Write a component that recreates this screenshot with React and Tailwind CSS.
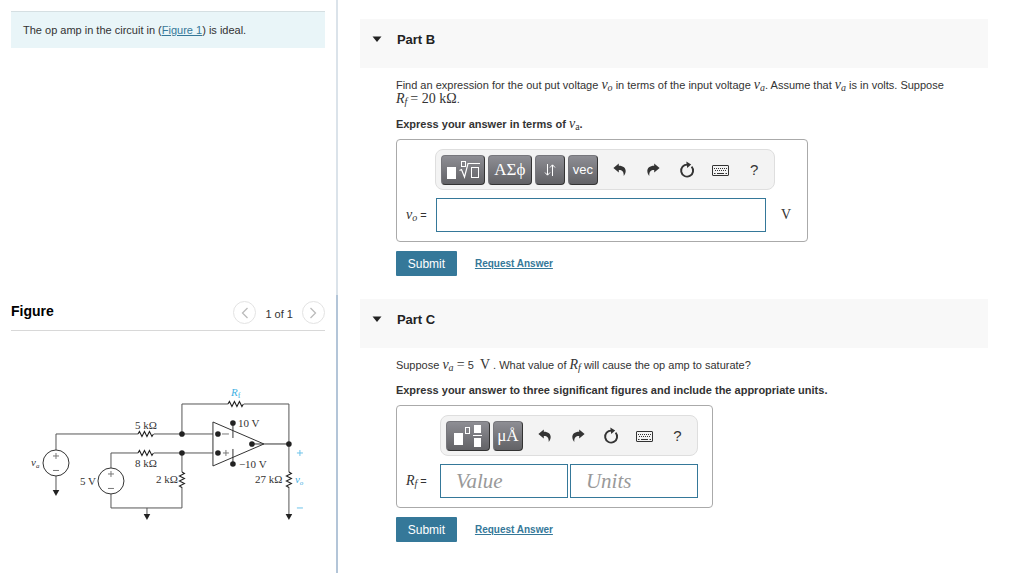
import React, { useState } from 'react';

const SERIF = "font-['Liberation_Serif',serif]";

/* v_o, R_f and the like */
function Sym({ name, sub, upright = false }) {
  return (
    <span className={`${SERIF} text-[14px] leading-none font-normal`}>
      <i>{name}</i>
      <sub className={`text-[10px] leading-none bottom-[-2px] ${upright ? '' : 'italic'}`}>{sub}</sub>
    </span>
  );
}

function UndoIcon({ flip = false }) {
  return (
    <svg width="14" height="14" viewBox="0 0 14 14" fill="#333" className={flip ? '-scale-x-100' : ''}>
      <path d="M5.8 0.4 L0.4 4.9 L5.8 9.4 V6.9 C9 6.7 11 8.4 10.7 13 C14.4 8.6 13 2.8 5.8 2.8 Z" />
    </svg>
  );
}

function ResetIcon() {
  return (
    <svg width="16" height="18" viewBox="0 0 16 18" fill="none">
      <path d="M8.5 3.6 A6 6 0 1 0 12.6 5.6" stroke="#333" strokeWidth="1.9" />
      <path d="M7.3 0.6 L12.2 3.4 L8.2 7 Z" fill="#333" />
    </svg>
  );
}

function KeyboardIcon() {
  return (
    <svg width="17" height="13" viewBox="0 0 17 13" fill="none" stroke="#333">
      <rect x="0.5" y="2.5" width="16" height="10" rx="0.5" />
      <path d="M2 5.5 H15 M3 7.5 H15" strokeDasharray="1 1" />
      <path d="M2 10.5 H3.5 M5 10.5 H12 M13.5 10.5 H15" />
    </svg>
  );
}

function RootIcon() {
  return (
    <svg width="34" height="24" viewBox="0 0 34 24" fill="none" stroke="#fff">
      <rect x="1" y="9" width="9" height="12" fill="#fff" stroke="none" />
      <rect x="15.5" y="3.5" width="4" height="5" />
      <path d="M13.5 12.5 L15.5 11.5 L18.5 19 L22 5.5 H34" strokeWidth="1.2" />
      <rect x="25.5" y="9.5" width="7" height="10" />
    </svg>
  );
}

function FractionIcon() {
  return (
    <svg width="30" height="24" viewBox="0 0 30 24" fill="none" stroke="#fff">
      <rect x="1" y="9" width="9" height="12" fill="#fff" stroke="none" />
      <rect x="12.5" y="3.5" width="4" height="6" />
      <rect x="21" y="1" width="7" height="8" fill="#fff" stroke="none" />
      <rect x="21" y="14" width="7" height="9" fill="#fff" stroke="none" />
      <path d="M20 11.5 H29" />
    </svg>
  );
}

function ArrowsIcon() {
  return (
    <svg width="12" height="14" viewBox="0 0 12 14" fill="none" stroke="#fff">
      <path d="M3.5 1 V12 M1 9.5 L3.5 12.2 L6 9.5 M8.5 13 V2 M6 4.5 L8.5 1.8 L11 4.5" />
    </svg>
  );
}

function ToolButton({ label, wide = false, children }) {
  return (
    <button
      type="button"
      aria-label={label}
      className={`flex h-[30px] items-center justify-center rounded-[4px] border border-r-[#333] border-b-[#333]
                  border-[#77777c] bg-linear-to-b from-[#8e8e94] to-[#626266] text-white ${wide ? 'w-11' : 'w-[30px]'}`}
    >
      {children}
    </button>
  );
}

function Toolbar({ children }) {
  return (
    <div className="flex h-[41px] items-center gap-[3px] rounded-lg border border-[#dedede] bg-[#f3f3f3] px-[5px]">
      {children}
      <div className="-mr-0.5 flex flex-1 items-center pl-0.5">
        {[
          ['Undo', <UndoIcon />],
          ['Redo', <UndoIcon flip />],
          ['Reset', <ResetIcon />],
          ['Keyboard shortcuts', <KeyboardIcon />],
          ['Help', <span className="text-[15px] text-[#333]">?</span>],
        ].map(([label, icon]) => (
          <button key={label} type="button" aria-label={label} className="flex flex-1 items-center justify-center">
            {icon}
          </button>
        ))}
      </div>
    </div>
  );
}

function Part({ title, children }) {
  const [open, setOpen] = useState(true);

  return (
    <section className="mb-[23px]">
      <h2 className="h-[49px] bg-[#f8f8f8]">
        <button
          type="button"
          aria-expanded={open}
          onClick={() => setOpen(!open)}
          className="flex w-full items-center gap-[15px] px-3 pt-3 text-[13px] leading-[18px] font-bold text-[#222]"
        >
          <svg width="10" height="8" viewBox="0 0 10 8" fill="#222"><path d="M0.5 0.5 H9.5 L5 6 Z" /></svg>
          {title}
        </button>
      </h2>
      {open && <div className="pt-[10px] pl-9">{children}</div>}
    </section>
  );
}

function SubmitRow() {
  return (
    <div className="mt-[9px] flex items-center gap-[18px]">
      <button type="submit" className="h-[25px] w-[61px] rounded-[1px] bg-[#357899] text-[12px] text-white">Submit</button>
      <a href="#answer" className="text-[10px] font-bold text-[#357899] underline">Request Answer</a>
    </div>
  );
}

const ZIG = 'l1.5 -2.5 l2.5 5 l2.5 -5 l2.5 5 l2.5 -5 l2.5 5 l1.5 -2.5';
const ZAG = 'l2.5 1.5 l-5 2.5 l5 2.5 l-5 2.5 l5 2.5 l-5 2.5 l2.5 1.5';
const RESISTORS = [`M127 49 ${ZIG}`, `M217 19 ${ZIG}`, `M127 68 ${ZIG}`, `M171 87 ${ZAG}`, `M278 87 ${ZAG}`];
const DOTS = [[171, 49], [207, 49], [171, 68], [207, 68], [241, 59], [222, 38], [222, 79], [278, 59]];
const GROUNDS = [[45, 111], [136, 135], [278, 135]];
const LABELS = [
  [124, 44, '5 kΩ'],
  [124, 82, '8 kΩ'],
  [145, 98, '2 kΩ'],
  [244, 98, '27 kΩ'],
  [227, 42, '10 V'],
  [228, 83, '−10 V'],
  [69, 100, '5 V'],
];

function Circuit() {
  return (
    <svg viewBox="0 0 314 140" role="img" aria-label="Op amp circuit" className={`w-full ${SERIF}`}>
      <g fill="none" stroke="#555">
        <path d="M45 65 V49 H127 M143 49 H202 M171 49 V19 H217 M233 19 H278 V87 M278 102 V130" />
        <path d="M100 83 V68 H127 M143 68 H202 M171 68 V87 M171 102 V123 H100 V109 M136 123 V130 M45 91 V106" />
        <path d="M202 37 V81 L253 59 Z M253 59 H278 M241 59 H253 M222 38 V53 M222 64 V79" stroke="#333" />
        <circle cx="45" cy="78" r="13" stroke="#333" />
        <circle cx="100" cy="96" r="13" stroke="#333" />
        {RESISTORS.map((d) => <path key={d} d={d} stroke="#222" strokeWidth="1.1" />)}
        <path d="M42 71 H48 M45 68 V74 M42 85.5 H48 M97 89 H103 M100 86 V92 M97 103.5 H103 M211 49 H218 M212 68 H218 M215 65 V71" stroke="#777" />
        <path d="M286 68 H292 M289 65 V71 M286 123 H292" stroke="#6cc3ea" />
      </g>
      <g fill="#222">
        {DOTS.map(([x, y]) => <circle key={`${x}-${y}`} cx={x} cy={y} r="2.8" />)}
        {GROUNDS.map(([x, y]) => <path key={x} d={`M${x} ${y} l-3.3 -6 h6.6 z`} />)}
      </g>
      <g fill="#333" fontSize="11">
        {LABELS.map(([x, y, text]) => <text key={text} x={x} y={y}>{text}</text>)}
        <text x="20" y="81" fontStyle="italic">v<tspan fontSize="7" dy="2">a</tspan></text>
      </g>
      <g fill="#3fb0e3" fontSize="11" fontStyle="italic">
        <text x="220" y="11">R<tspan fontSize="8" dy="2" fontStyle="normal">f</tspan></text>
        <text x="284" y="98">v<tspan fontSize="7" dy="2">o</tspan></text>
      </g>
    </svg>
  );
}

function PagerButton({ label, d }) {
  return (
    <button type="button" aria-label={label} className="flex size-[23px] items-center justify-center rounded-full border border-[#e3e3e3]">
      <svg width="8" height="12" viewBox="0 0 8 12" fill="none" stroke="#bbb" strokeWidth="1.3"><path d={d} /></svg>
    </button>
  );
}

export default function App() {
  return (
    <div className="flex min-h-screen bg-white font-['Liberation_Sans',Arial,sans-serif] text-[11px] leading-[14px] text-[#333]">
      {/* Problem statement and figure */}
      <aside className="flex w-[33%] shrink-0 flex-col">
        <div className="flex-1 border-r-2 border-[#dbe3ea] pt-[11px] pr-[11px] pl-[11px]">
          <p className="border-t border-[#d5dfe2] bg-[#e9f5f8] px-3 py-[11px]">
            The op amp in the circuit in (<a href="#figure" className="text-[#357899] underline">Figure 1</a>) is ideal.
          </p>
        </div>
        <div id="figure" className="border-r-2 border-[#b3c5d8] pr-[11px] pb-12 pl-[11px]">
          <div className="flex h-9 items-center justify-between border-b border-[#d8d8d8]">
            <h2 className="pb-1 text-[14px] font-bold text-black">Figure</h2>
            <div className="flex items-center gap-[9px]">
              <PagerButton label="Previous figure" d="M6.5 1 L1.5 6 L6.5 11" />
              <span className="pt-0.5">1 of 1</span>
              <PagerButton label="Next figure" d="M1.5 1 L6.5 6 L1.5 11" />
            </div>
          </div>
          <div className="pt-[54px]">
            <Circuit />
          </div>
        </div>
      </aside>

      <main className="min-w-0 flex-1 pt-[19px] pr-9 pl-[22px]">
        <Part title="Part B">
          <form onSubmit={(e) => e.preventDefault()}>
            <p>
              Find an expression for the out put voltage <Sym name="v" sub="o" /> in terms of the input
              voltage <Sym name="v" sub="a" />. Assume that <Sym name="v" sub="a" /> is in volts. Suppose{' '}
              <span className="whitespace-nowrap">
                <Sym name="R" sub="f" /> <span className={`${SERIF} text-[14px] leading-none`}>= 20 kΩ</span>.
              </span>
            </p>
            <p className="mt-[11px] font-bold">
              Express your answer in terms of <Sym name="v" sub="a" upright />.
            </p>
            <div className="mt-2 grid w-[412px] max-w-full grid-cols-[38px_1fr] items-center gap-y-2 rounded-[4px] border border-[#aaa] pt-[9px] pr-[10px] pb-[9px]">
              <div className="col-start-2 pr-[22px]">
                <Toolbar>
                  <ToolButton label="Templates" wide><RootIcon /></ToolButton>
                  <ToolButton label="Greek symbols" wide><span className={`${SERIF} text-[17px]`}>ΑΣϕ</span></ToolButton>
                  <ToolButton label="Arrows"><ArrowsIcon /></ToolButton>
                  <ToolButton label="Vectors"><span className="text-[13px]">vec</span></ToolButton>
                </Toolbar>
              </div>
              <label htmlFor="vo" className="pl-[9px] whitespace-nowrap"><Sym name="v" sub="o" /> =</label>
              <div className="flex items-center">
                <input id="vo" className="ml-px h-[34px] min-w-0 flex-1 border border-[#357899] px-2 text-[14px] outline-none" />
                <span className={`${SERIF} w-[31px] pl-[15px] text-[14px]`}>V</span>
              </div>
            </div>
            <SubmitRow />
          </form>
        </Part>

        <Part title="Part C">
          <form onSubmit={(e) => e.preventDefault()}>
            <p>
              Suppose <Sym name="v" sub="a" /> <span className={`${SERIF} text-[14px] leading-none`}>=</span> 5{'\u00a0 '}
              <span className={`${SERIF} text-[14px] leading-none`}>V</span> . What value of{' '}
              <Sym name="R" sub="f" /> will cause the op amp to saturate?
            </p>
            <p className="mt-[11px] font-bold">
              Express your answer to three significant figures and include the appropriate units.
            </p>
            <div className="mt-2 grid w-[317px] max-w-full grid-cols-[43px_1fr] items-center gap-y-2 rounded-[4px] border border-[#aaa] pt-[9px] pr-[14px] pb-[9px]">
              <div className="col-start-2">
                <Toolbar>
                  <ToolButton label="Templates" wide><FractionIcon /></ToolButton>
                  <ToolButton label="Units symbols"><span className={`${SERIF} text-[17px]`}>μÅ</span></ToolButton>
                </Toolbar>
              </div>
              <label htmlFor="rf-value" className="pl-[9px] whitespace-nowrap"><Sym name="R" sub="f" /> =</label>
              <div className="grid grid-cols-2 gap-[2px]">
                <input
                  id="rf-value"
                  placeholder="Value"
                  className={`${SERIF} h-[34px] w-full border border-[#357899] px-[15px] text-[21px] italic outline-none placeholder:text-[#999]`}
                />
                <input
                  aria-label="Units"
                  placeholder="Units"
                  className={`${SERIF} h-[34px] w-full border border-[#357899] px-[15px] text-[21px] italic outline-none placeholder:text-[#999]`}
                />
              </div>
            </div>
            <SubmitRow />
          </form>
        </Part>
      </main>
    </div>
  );
}
